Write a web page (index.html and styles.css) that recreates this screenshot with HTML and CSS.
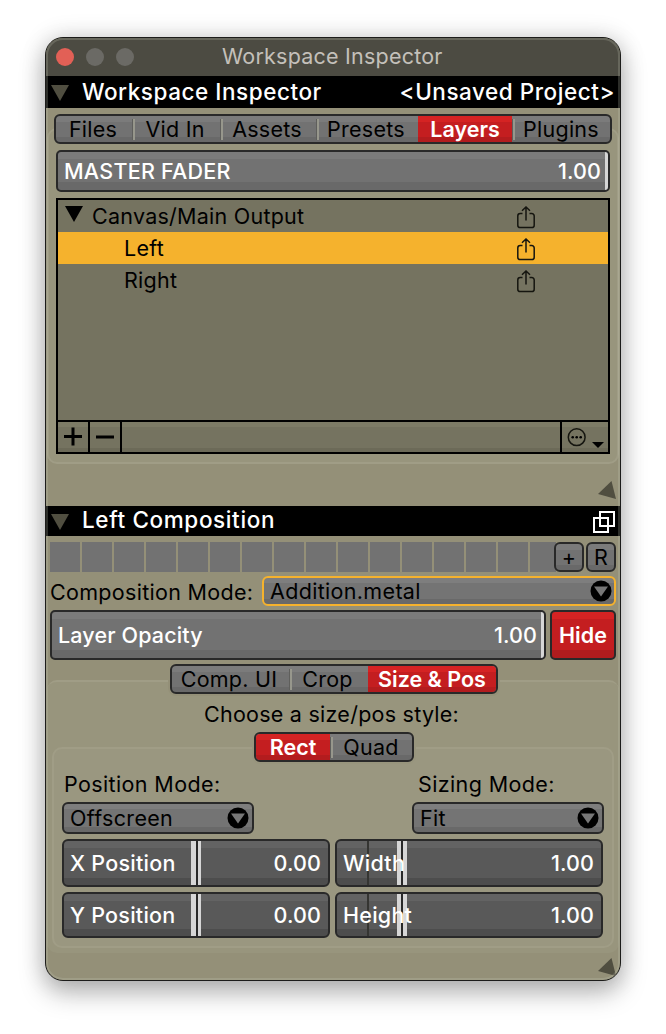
FILE: index.html
```html
<!DOCTYPE html>
<html lang="en">
<head>
<meta charset="utf-8">
<title>Workspace Inspector</title>
<link rel="stylesheet" href="styles.css">
</head>
<body>
<svg class="defs" width="0" height="0">
  <symbol id="share" viewBox="0 0 20 24"><path d="M6.500 7.500H4.200A2.400 2.400 0 0 0 1.800 9.900v9.300a2.400 2.400 0 0 0 2.400 2.400h11.600a2.400 2.400 0 0 0 2.400-2.400V9.900a2.400 2.400 0 0 0-2.400-2.400H13.500M10 14.500V1.500M6 4.700 10 1l4 3.700" fill="none" stroke="#15150f" stroke-width="1.500"/></symbol>
  <symbol id="drop" viewBox="0 0 22 22"><circle cx="11" cy="11" r="10.500" fill="#000"/><path d="M4 6.500h14L11 16.500z" fill="#777"/></symbol>
  <symbol id="grip" viewBox="0 0 18 18"><path d="M13.500 0 18 18 0 13z" fill="#504e40"/></symbol>
  <symbol id="tri" viewBox="0 0 18 16"><path d="M0 0h18L9 16z" fill="currentColor"/></symbol>
</svg>
<main class="window">
  <div class="titlebar">
    <i class="light close"></i><i class="light"></i><i class="light"></i>
    <span class="title">Workspace Inspector</span>
  </div>

  <header class="bar bar-top">
    <svg class="tri"><use href="#tri"/></svg>
    <h1>Workspace Inspector</h1>
    <span class="project">&lt;Unsaved Project&gt;</span>
  </header>
  <section class="workspace">
    <nav class="tabs main-tabs">
      <span class="tab t-files">Files</span><span class="tab t-vid">Vid In</span><span class="tab t-assets">Assets</span><span class="tab t-presets">Presets</span><span class="tab t-layers on">Layers</span><span class="tab t-plugins">Plugins</span>
    </nav>
    <div class="group group-main">
      <div class="slider full master"><span>MASTER FADER</span><span class="num">1.00</span></div>
      <div class="table">
        <div class="rows">
          <div class="row root"><svg class="tri"><use href="#tri"/></svg><span>Canvas/Main Output</span><svg class="share"><use href="#share"/></svg></div>
          <div class="row child sel"><span>Left</span><svg class="share"><use href="#share"/></svg></div>
          <div class="row child"><span>Right</span><svg class="share"><use href="#share"/></svg></div>
        </div>
        <div class="tools">
          <span class="tool"><svg width="30" height="30"><path d="M6 14.500h18M15 5.500v18" stroke="#000" stroke-width="3"/></svg></span>
          <span class="tool"><svg width="30" height="30"><path d="M6 15h18" stroke="#000" stroke-width="3"/></svg></span>
          <span class="tool-fill"></span>
          <span class="tool-more"><svg width="46" height="30"><circle cx="14.700" cy="15.200" r="8.400" fill="none" stroke="#15150f" stroke-width="1.500"/><circle cx="10.700" cy="15.200" r="1.300"/><circle cx="14.700" cy="15.200" r="1.300"/><circle cx="18.700" cy="15.200" r="1.300"/><path d="M30 20h12l-6 6z"/></svg></span>
        </div>
      </div>
    </div>
    <svg class="grip"><use href="#grip"/></svg>
  </section>

  <header class="bar bar-comp">
    <svg class="tri"><use href="#tri"/></svg>
    <h1>Left Composition</h1>
    <svg class="copy" width="24" height="24"><path d="M8 2h14v14H8zM2 8h14v14H2z" fill="none" stroke="#fff" stroke-width="2"/></svg>
  </header>
  <section class="composition">
    <div class="cells">
      <i></i><i></i><i></i><i></i><i></i><i></i><i></i><i></i><i></i><i></i><i></i><i></i><i></i><i></i><i></i><i></i>
      <span class="btn">+</span><span class="btn">R</span>
    </div>
    <div class="mode">
      <label>Composition Mode:</label>
      <div class="combo focus"><span>Addition.metal</span><svg><use href="#drop"/></svg></div>
    </div>
    <div class="opacity">
      <div class="slider full"><span>Layer Opacity</span><span class="num">1.00</span></div>
      <span class="hide">Hide</span>
    </div>
    <nav class="tabs sub-tabs">
      <span class="tab t-ui">Comp. UI</span><span class="tab t-crop">Crop</span><span class="tab t-size on">Size &amp; Pos</span>
    </nav>
    <div class="group group-size">
      <p class="choose">Choose a size/pos style:</p>
      <nav class="tabs shape-tabs"><span class="tab t-rect on">Rect</span><span class="tab t-quad">Quad</span></nav>
      <div class="group group-rect">
        <div class="modes">
          <div class="field"><label>Position Mode:</label><div class="combo"><span>Offscreen</span><svg><use href="#drop"/></svg></div></div>
          <div class="field"><label>Sizing Mode:</label><div class="combo"><span>Fit</span><svg><use href="#drop"/></svg></div></div>
        </div>
        <div class="sliders">
          <div class="slider dark"><i class="knob mid"></i><span>X Position</span><span class="num">0.00</span></div>
          <div class="slider dark"><i class="tick"></i><i class="knob low"></i><span>Width</span><span class="num">1.00</span></div>
          <div class="slider dark"><i class="knob mid"></i><span>Y Position</span><span class="num">0.00</span></div>
          <div class="slider dark"><i class="tick"></i><i class="knob low"></i><span>Height</span><span class="num">1.00</span></div>
        </div>
      </div>
    </div>
    <svg class="grip"><use href="#grip"/></svg>
  </section>
</main>
</body>
</html>
```

FILE: styles.css
```css
* { box-sizing: border-box; }
body {
  margin: 0;
  padding: 37px 45px;
  height: 1034px;
  overflow: hidden;
  background: #fff;
  font: 400 21.5px/26px Inter, "Liberation Sans", sans-serif;
  letter-spacing: .25px;
  color: #000;
}
.defs { position: absolute; }
svg { display: block; flex: none; }
h1, p { margin: 0; font: inherit; }
span, label, h1, p { white-space: nowrap; }

.window {
  position: relative;
  width: 576px;
  height: 944px;
  border: 1px solid #1c1c1a;
  border-radius: 18px;
  overflow: hidden;
  background: #949078;
  box-shadow: 0 12px 26px rgba(0,0,0,.27), 0 0 24px rgba(0,0,0,.16);
}
.window::after {
  content: "";
  position: absolute;
  inset: 0;
  border: 2px solid rgba(200,205,185,.22);
  border-radius: 17px;
  pointer-events: none;
}

.titlebar {
  display: flex;
  align-items: center;
  gap: 12px;
  height: 38px;
  padding-left: 10px;
  background: #4c4b42;
}
.light { width: 18px; height: 18px; border-radius: 50%; background: #6b6a65; }
.light.close { background: #e26056; }
.title { margin: -2px 0 0 76px; color: #c4c0ba; letter-spacing: .22px; }

.bar {
  display: flex;
  align-items: center;
  background: #000;
  color: #fff;
  padding-left: 5px;
}
.bar h1, .project { font-weight: 500; font-size: 22.5px; letter-spacing: .54px; }
.bar .tri { width: 18px; height: 16px; color: #504e40; margin: 2px 13px 0 0; }
.bar-top { height: 32px; }
.bar-comp { height: 30px; }
.bar-comp h1 { margin-top: -2px; letter-spacing: .62px; }
.bar-comp .tri { margin-top: 1px; }
.project { margin-left: auto; margin-right: 5px; }
.copy { margin: 2px 4px 0 auto; }

.group { border: 2px solid #a09d86; border-radius: 10px; }
.tabs {
  display: flex;
  position: relative;
  height: 30px;
  border: 2px solid #292929;
  border-radius: 6px;
  overflow: hidden;
  background: linear-gradient(#7b7b7b 0 6px, #727272 6px 21px, #696969 21px);
}
.tab { display: flex; align-items: center; justify-content: center; height: 26px; }
.tab + .tab:not(.on) { background: linear-gradient(90deg, #5f5f5c 0 1px, #97978c 1px 3px, transparent 3px) 0 3px / 100% 21px no-repeat; }
.tab.on {
  color: #fff;
  font-weight: 600;
  letter-spacing: 0;
  background: linear-gradient(#d52323 0 6px, #c41e20 6px 21px, #b31c1e 21px);
}

.workspace { height: 398px; padding-top: 6px; }
.main-tabs { width: 558px; margin-left: 8px; }
.t-files { width: 76px; padding-right: 2px; }
.t-vid { width: 88px; padding-right: 2px; }
.t-assets { width: 96px; padding-right: 2px; }
.t-presets { width: 102px; padding-right: 2px; }
.t-layers { width: 94px; }
.t-plugins { width: 98px; }
.group-main { margin: -16px 1px 0; padding: 20px 7px 8px; background: #98957d; }

.slider {
  display: flex;
  align-items: center;
  justify-content: space-between;
  position: relative;
  border: 2px solid #292929;
  border-radius: 6px;
  padding: 0 7px 0 6px;
  font-weight: 500;
  color: #fff;
}
.slider.full {
  border-radius: 5px;
  background: linear-gradient(90deg, transparent calc(100% - 3px), #d6d6d6 0), linear-gradient(#7b7b7b 0 7px, #727272 7px calc(100% - 8px), #696969 0);
}
.slider span { position: relative; }
.master { width: 554px; height: 42px; }
.table { width: 554px; height: 256px; margin-top: 6px; border: 2px solid #000; background: #757360; }
.rows { height: 220px; }
.row { display: flex; align-items: center; height: 32px; }
.root { padding-left: 7px; }
.root .tri { width: 18px; height: 16px; margin: -4px 9px 0 0; }
.root span { width: 424px; }
.child { padding-left: 66px; }
.child span { width: 392px; }
.sel { background: #f5b22d; }
.share { width: 20px; height: 24px; margin-top: 4px; }
.tools { display: flex; height: 32px; border-top: 2px solid #000; background: linear-gradient(#7d7b66 0 5px, #757360 5px 26px, #6c6a58 26px); }
.tool { width: 32px; border-right: 2px solid #000; }
.tool-fill { flex: 1; }
.tool-more { width: 48px; border-left: 2px solid #000; }
.grip { width: 18px; height: 18px; margin-left: auto; margin-right: 4px; }
.workspace .grip { margin-top: 17px; }

.composition { padding: 6px 4px 0; }
.cells { display: flex; gap: 2px; height: 30px; }
.cells i { flex: 0 0 30px; background: #727272; }
.cells i:nth-of-type(16) { flex-basis: 26px; margin-right: -4px; }
.btn {
  display: flex; align-items: center; justify-content: center;
  position: relative;
  width: 30px; height: 30px;
  border: 2px solid #292929; border-radius: 6px;
  background: linear-gradient(#7b7b7b 0 6px, #727272 6px 21px, #696969 21px);
}
.mode { display: flex; height: 30px; margin-top: 4px; }
.mode label { width: 212px; line-height: 33px; letter-spacing: .3px; }
.combo {
  display: flex; align-items: center; justify-content: space-between;
  height: 32px; padding: 0 3px 0 6px;
  border: 2px solid #292929; border-radius: 6px;
  background: linear-gradient(#7e7e7e 0 5px, #747474 5px calc(100% - 5px), #696969 0);
  letter-spacing: .33px;
}
.combo svg { width: 22px; height: 22px; }
.focus { flex: 0 0 354px; height: 30px; padding-right: 2px; border-color: #f5b22d; }
.opacity { display: flex; gap: 4px; height: 50px; margin-top: 4px; }
.opacity .slider { width: 496px; letter-spacing: .15px; }
.hide {
  display: flex; align-items: center; justify-content: center;
  width: 66px; border: 2px solid #292929; border-radius: 5px;
  background: linear-gradient(#d52323 0 7px, #c41e20 7px 38px, #b01c1e 38px);
  color: #fff; font-weight: 600; letter-spacing: 0;
}
.slider .num { letter-spacing: .1px; }
.sub-tabs { z-index: 1; width: 328px; margin: 4px 0 0 120px; box-shadow: 0 0 0 2px #949078; }
.t-ui { width: 117px; padding-right: 3px; }
.t-crop { width: 79px; padding-right: 2px; }
.t-size { width: 128px; }
.group-size { height: 273px; margin: -14px -3px 0; padding-top: 19px; border-width: 2px 0 0; background: #98957d; }
.choose { text-align: center; height: 31px; line-height: 26px; padding-right: 3px; }
.shape-tabs { z-index: 1; width: 160px; margin: 0 auto; left: 1px; box-shadow: 0 0 0 2px #98957d; }
.t-rect { width: 74px; }
.t-quad { width: 82px; }
.group-rect { width: 562px; height: 201px; margin: -15px 0 0 5px; padding: 22px 8px 0; background: #9a9780; }
.modes { display: flex; justify-content: space-between; }
.field { width: 192px; }
.field label { display: block; height: 31px; line-height: 26px; padding-left: 2px; letter-spacing: .38px; }
.field:last-child label { padding-left: 6px; }
.sliders { display: grid; grid-template-columns: 268px 268px; grid-template-rows: 48px 46px; gap: 5px; margin-top: 5px; }
.slider.dark { background: linear-gradient(#636363 0 7px, #595959 7px calc(100% - 7px), #4d4d4d 0); }
.knob { position: absolute; top: 0; bottom: 0; width: 10px; background: linear-gradient(90deg, #d6d6d6 0 4px, #292929 4px 7px, #d6d6d6 7px); }
.mid { left: 127px; width: 10px; background: linear-gradient(90deg, #d6d6d6 0 5px, #292929 5px 7px, #d6d6d6 7px); }
.low { left: 60px; background: linear-gradient(90deg, #d6d6d6 0 4px, #292929 4px 6px, #d6d6d6 6px); }
.tick { position: absolute; left: 30px; top: 0; bottom: 0; width: 2px; background: #353532; }
.composition > .grip { margin-top: 5px; margin-right: 0; }
```
